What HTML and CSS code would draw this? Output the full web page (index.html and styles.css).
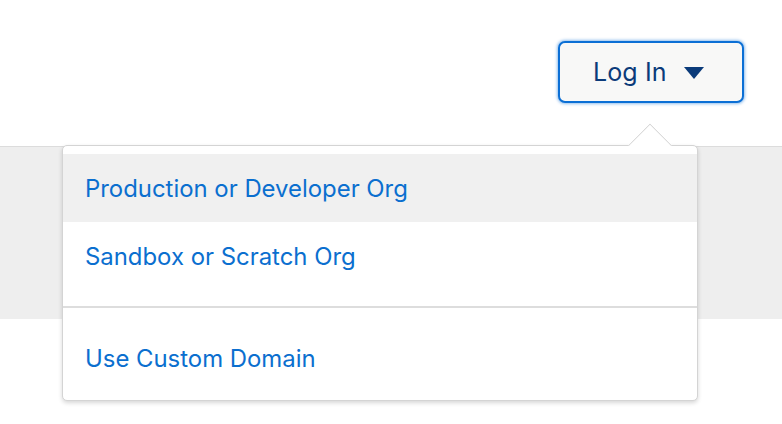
FILE: index.html
```html
<!DOCTYPE html>
<html lang="en">
<head>
<meta charset="utf-8">
<title>Log In</title>
<link rel="stylesheet" href="styles.css">
</head>
<body>
  <header class="header">
    <button class="login-btn" type="button">
      <span class="login-label">Log In</span>
      <svg class="caret" width="20" height="12" viewBox="0 0 20 12" aria-hidden="true"><path d="M0 0 H20 L10 12 Z" fill="#0b3b7a"/></svg>
    </button>
  </header>
  <div class="band"></div>
  <div class="menu">
    <ul class="menu-list">
      <li class="menu-item is-active">Production or Developer Org</li>
      <li class="menu-item">Sandbox or Scratch Org</li>
    </ul>
    <div class="menu-sep"></div>
    <ul class="menu-list">
      <li class="menu-item">Use Custom Domain</li>
    </ul>
  </div>
</body>
</html>
```

FILE: styles.css
```css
html, body {
  margin: 0;
  padding: 0;
  background: #ffffff;
  font-family: Inter, "Noto Sans", "Liberation Sans", sans-serif;
}

.header {
  height: 146px;
  box-sizing: border-box;
  display: flex;
  justify-content: flex-end;
  align-items: flex-start;
  padding: 41px 38px 0 0;
}

.login-btn {
  width: 186px;
  height: 62px;
  box-sizing: border-box;
  display: flex;
  align-items: center;
  gap: 17px;
  padding: 0 0 0 33px;
  background: #f8f8f7;
  border: 2px solid #0b6fd5;
  border-radius: 7px;
  box-shadow: 0 0 3px 1px rgba(11, 111, 213, 0.45);
  font-family: inherit;
  font-size: 25px;
  color: #0b3b7a;
  cursor: pointer;
}

.login-label {
  line-height: 1;
  letter-spacing: 0.1px;
}

.caret {
  display: block;
  margin-top: 1px;
}

.band {
  height: 173px;
  box-sizing: border-box;
  background: #eeeeee;
  border-top: 1px solid #dcdcdc;
}

.menu {
  position: absolute;
  left: 62px;
  top: 145px;
  width: 636px;
  box-sizing: border-box;
  background: #ffffff;
  border: 1px solid #d4d4d4;
  border-radius: 5px;
  padding: 8px 0;
  box-shadow: 0 2px 4px rgba(0, 0, 0, 0.16);
}

.menu::before {
  content: "";
  position: absolute;
  left: 571px;
  top: -16px;
  width: 32px;
  height: 32px;
  box-sizing: border-box;
  background: #ffffff;
  border-top: 1px solid #d4d4d4;
  border-left: 1px solid #d4d4d4;
  transform: rotate(45deg);
  clip-path: polygon(0 0, 100% 0, 0 100%);
}

.menu-list {
  list-style: none;
  margin: 0;
  padding: 0;
}

.menu-item {
  height: 68px;
  display: flex;
  align-items: center;
  padding-left: 22px;
  font-size: 23.9px;
  color: #0b6fcf;
}

.menu-item.is-active {
  background: #f0f0f0;
}

.menu-sep {
  margin: 16px 0;
  border-top: 2px solid #dddddd;
}
```
